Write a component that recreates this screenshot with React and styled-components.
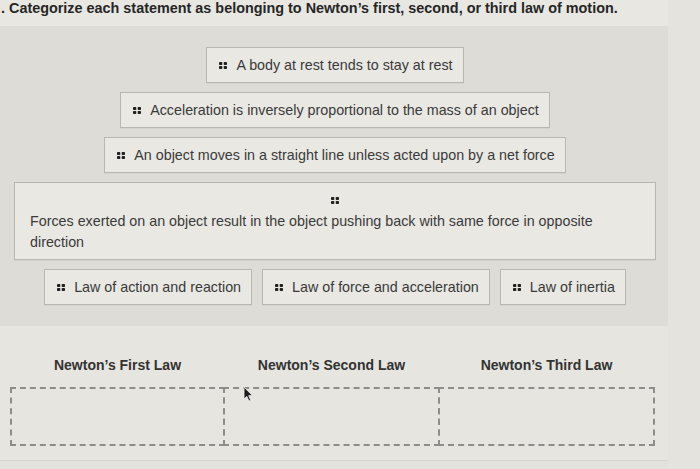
import styled, { createGlobalStyle } from "styled-components";

const GlobalStyle = createGlobalStyle`
  html, body {
    margin: 0;
    padding: 0;
    background: #e3e2dc;
    font-family: "Liberation Sans", Arial, Helvetica, sans-serif;
    color: #353535;
  }
`;

const statements = [
  "A body at rest tends to stay at rest",
  "Acceleration is inversely proportional to the mass of an object",
  "An object moves in a straight line unless acted upon by a net force",
];

const longStatement =
  "Forces exerted on an object result in the object pushing back with same force in opposite direction";

const laws = ["Law of action and reaction", "Law of force and acceleration", "Law of inertia"];

const categories = ["Newton\u2019s First Law", "Newton\u2019s Second Law", "Newton\u2019s Third Law"];

const Page = styled.div`
  display: flex;
  width: 700px;
  min-height: 469px;
`;

const Content = styled.div`
  width: 668px;
  display: flex;
  flex-direction: column;
`;

const SideStrip = styled.div`
  flex: 1;
  background: #e4e3de;
`;

const Prompt = styled.div`
  height: 26px;
  padding-left: 1px;
  background: #e8e7e2;
  font-size: 14.4px;
  font-weight: 700;
  line-height: 16px;
  color: #262626;
`;

const SourcePanel = styled.div`
  position: relative;
  background: #dddcd6;
  padding: 21px 12px 21px 14px;
  display: flex;
  flex-wrap: wrap;
  justify-content: center;
  gap: 9px 10px;

  &::after {
    content: "";
    position: absolute;
    left: 326px;
    bottom: -9px;
    border-left: 11px solid transparent;
    border-right: 11px solid transparent;
    border-top: 9px solid #dddcd6;
  }
`;

const Card = styled.div`
  display: flex;
  flex-direction: ${(p) => (p.$stacked ? "column" : "row")};
  align-items: ${(p) => (p.$stacked ? "stretch" : "center")};
  gap: ${(p) => (p.$stacked ? "7px" : "9px")};
  padding: ${(p) => (p.$stacked ? "14px 15px 6px" : "7px 10px 7px 12px")};
  background: #e9e8e3;
  border: 1px solid #b8b7b2;
  box-shadow: 0 1px 0 rgba(0, 0, 0, 0.04);
  font-size: 14.3px;
  line-height: ${(p) => (p.$stacked ? "21px" : "20px")};
  color: #3a3a3a;
`;

const GripWrap = styled.span`
  display: flex;
  justify-content: center;
  flex-shrink: 0;
`;

function Grip() {
  return (
    <GripWrap>
      <svg width="8" height="7" viewBox="0 0 8 7">
        <rect x="0" y="0" width="3.3" height="3" rx="0.7" fill="#222" />
        <rect x="4.7" y="0" width="3.3" height="3" rx="0.7" fill="#222" />
        <rect x="0" y="4" width="3.3" height="3" rx="0.7" fill="#222" />
        <rect x="4.7" y="4" width="3.3" height="3" rx="0.7" fill="#222" />
      </svg>
    </GripWrap>
  );
}

const DropArea = styled.div`
  position: relative;
  background: #e6e5e0;
  padding: 31px 13px 14px 10px;
  display: grid;
  grid-template-columns: repeat(3, 1fr);
  border-bottom: 1px solid #d6d5cf;
`;

const Column = styled.div`
  display: flex;
  flex-direction: column;
  align-items: stretch;
  margin-left: ${(p) => (p.$first ? "0" : "-2px")};
`;

const Heading = styled.div`
  text-align: center;
  font-size: 14px;
  font-weight: 700;
  line-height: 16px;
  color: #333;
  margin-bottom: 14px;
`;

const Zone = styled.div`
  height: 55px;
  border: 2px dashed #8d8d8a;
`;

const Pointer = styled.svg`
  position: absolute;
  left: 243px;
  top: 60px;
`;

export default function App() {
  return (
    <>
      <GlobalStyle />
      <Page>
        <Content>
          <Prompt>. Categorize each statement as belonging to Newton’s first, second, or third law of motion.</Prompt>
          <SourcePanel>
            {statements.map((text) => (
              <Card key={text}>
                <Grip />
                <span>{text}</span>
              </Card>
            ))}
            <Card $stacked>
              <Grip />
              <span>{longStatement}</span>
            </Card>
            {laws.map((text) => (
              <Card key={text}>
                <Grip />
                <span>{text}</span>
              </Card>
            ))}
          </SourcePanel>
          <DropArea>
            {categories.map((name, i) => (
              <Column key={name} $first={i === 0}>
                <Heading>{name}</Heading>
                <Zone />
              </Column>
            ))}
            <Pointer width="10" height="16" viewBox="0 0 10 16">
              <path d="M1 1 L1 13 L3.8 10.4 L6 15 L7.8 14.2 L5.7 9.7 L9.4 9.6 Z" fill="#1e1e1e" stroke="#f2f2f2" strokeWidth="0.8" />
            </Pointer>
          </DropArea>
        </Content>
        <SideStrip />
      </Page>
    </>
  );
}
